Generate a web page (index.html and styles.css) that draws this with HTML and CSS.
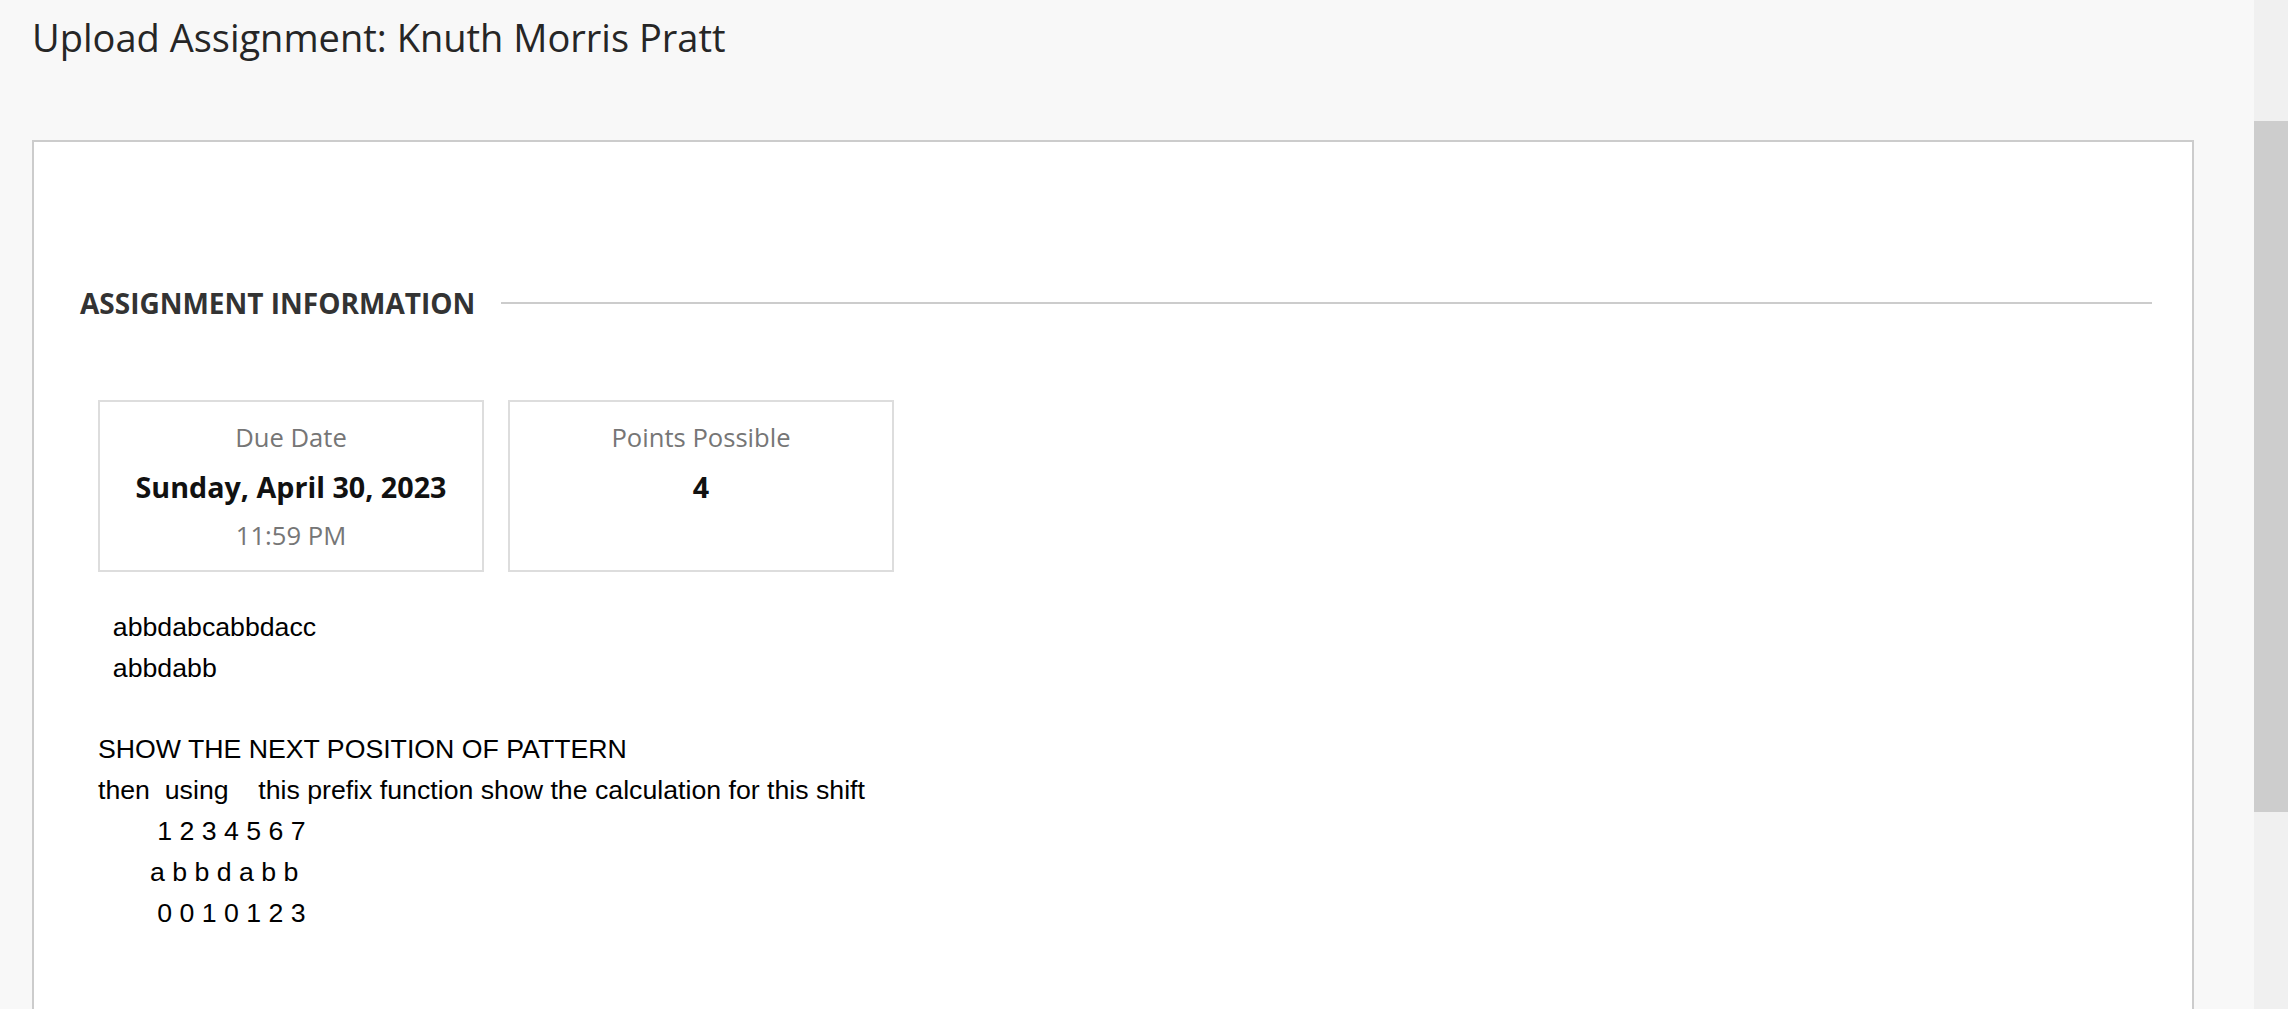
FILE: index.html
```html
<!DOCTYPE html>
<html lang="en">
<head>
    <meta charset="UTF-8">
    <meta name="viewport" content="width=device-width, initial-scale=1.0">
    <title>Upload Assignment: Knuth Morris Pratt</title>
    <link rel="stylesheet" href="styles.css">
</head>
<body>
    <div class="viewport">
        <div class="page">
            <h1 class="page-title">Upload Assignment: Knuth Morris Pratt</h1>

            <div class="panel">
                <div class="section-header">
                    <h2>ASSIGNMENT INFORMATION</h2>
                    <div class="rule"></div>
                </div>

                <!-- Due date and points cards -->
                <div class="info-cards">
                    <div class="info-card">
                        <div class="card-label">Due Date</div>
                        <div class="card-value">Sunday, April 30, 2023</div>
                        <div class="card-label">11:59 PM</div>
                    </div>
                    <div class="info-card">
                        <div class="card-label">Points Possible</div>
                        <div class="card-value">4</div>
                    </div>
                </div>

                <div class="instructions">
                    <p>&nbsp;&nbsp;abbdabcabbdacc</p>
                    <p>&nbsp;&nbsp;abbdabb</p>
                    <p>&nbsp;</p>
                    <p>SHOW THE NEXT POSITION OF PATTERN</p>
                    <p>then&nbsp; using&nbsp;&nbsp;&nbsp; this prefix function show the calculation for this shift</p>
                    <p>&nbsp;&nbsp;&nbsp;&nbsp;&nbsp;&nbsp;&nbsp;&nbsp;1 2 3 4 5 6 7</p>
                    <p>&nbsp;&nbsp;&nbsp;&nbsp;&nbsp;&nbsp;&nbsp;a b b d a b b</p>
                    <p>&nbsp;&nbsp;&nbsp;&nbsp;&nbsp;&nbsp;&nbsp;&nbsp;0 0 1 0 1 2 3</p>
                </div>
            </div>
        </div>

        <div class="scrollbar">
            <div class="thumb"></div>
        </div>
    </div>
</body>
</html>
```

FILE: styles.css
```css
* {
    margin: 0;
    padding: 0;
    box-sizing: border-box;
}

body {
    background: #f8f8f8;
    font-family: "Open Sans", Arial, sans-serif;
    color: #262626;
}

.viewport {
    display: flex;
    height: 100vh;
    overflow: hidden;
}

.page {
    flex: 1;
    min-width: 0;
    padding: 0 60px 0 32px;
}

.page-title {
    font-size: 38px;
    font-weight: 400;
    line-height: normal;
    margin-top: 11px;
    margin-bottom: 77px;
    color: #262626;
}

.panel {
    background: white;
    border: 2px solid #cccccc;
    border-bottom: none;
    padding: 142px 40px 0 46px;
    min-height: 900px;
}

.section-header {
    display: flex;
    align-items: center;
    gap: 26px;
}

.section-header h2 {
    font-size: 28px;
    font-weight: 700;
    line-height: normal;
    color: #333;
    white-space: nowrap;
}

.rule {
    flex: 1;
    height: 2px;
    background: #cccccc;
    margin-top: -1px;
}

.info-cards {
    display: flex;
    gap: 24px;
    margin: 78px 0 0 18px;
}

.info-card {
    width: 386px;
    height: 172px;
    border: 2px solid #dddddd;
    padding-top: 10.5px;
    text-align: center;
}

.card-label {
    font-size: 25.6px;
    line-height: 49px;
    color: #767676;
}

.card-value {
    font-size: 28.7px;
    font-weight: 700;
    line-height: 49px;
    color: #111;
}

.instructions {
    margin: 35px 0 0 18px;
    font-family: "Liberation Sans", Arial, sans-serif;
    font-size: 26.7px;
    line-height: 40.8px;
    color: #000;
}

/* scrollbar of the content frame */
.scrollbar {
    flex: 0 0 34px;
    width: 34px;
    background: #f0f0f0;
}

.thumb {
    margin-top: 121px;
    height: 691px;
    background: #cdcdcd;
}
```
